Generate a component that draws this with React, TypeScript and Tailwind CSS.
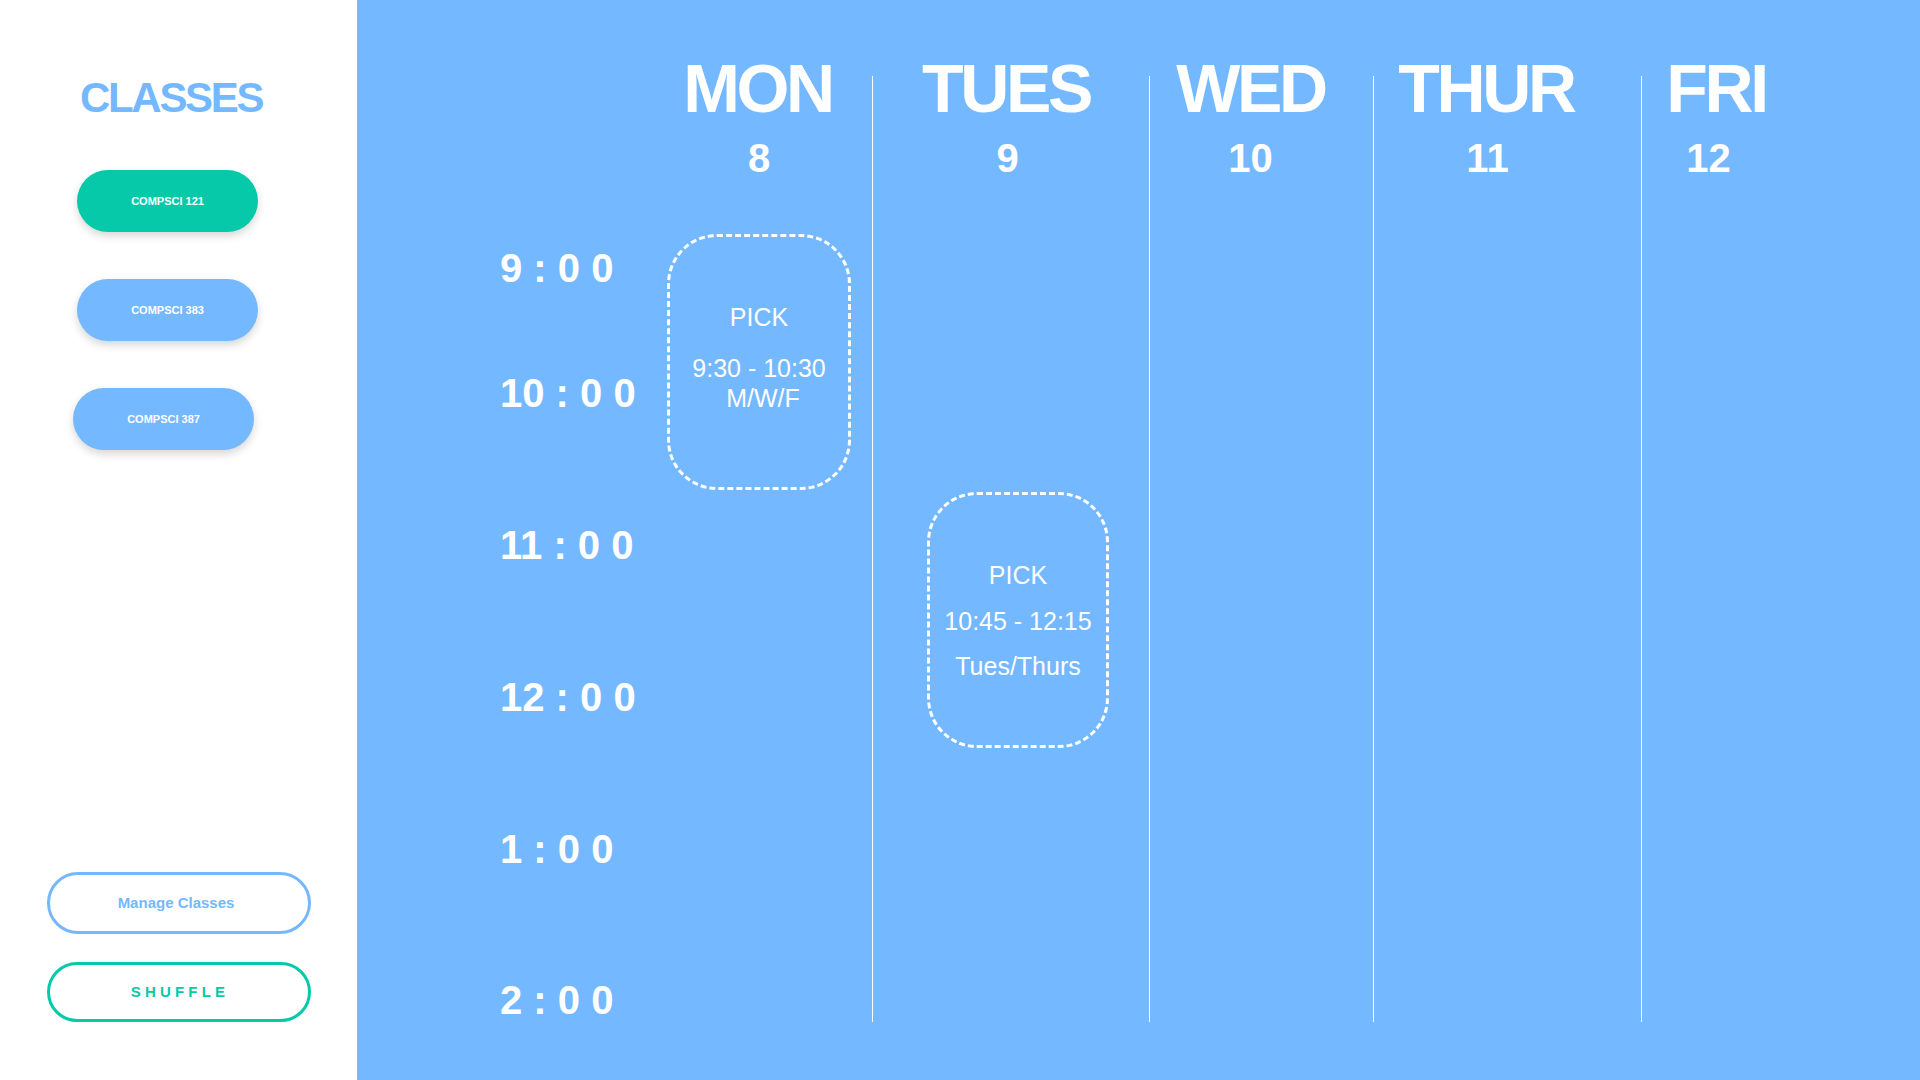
const classes = [
  { name: "COMPSCI 121", active: true, shift: "ml-[77px]", mt: "mt-[51px]" },
  { name: "COMPSCI 383", active: false, shift: "ml-[77px]", mt: "mt-[47px]" },
  { name: "COMPSCI 387", active: false, shift: "ml-[73px]", mt: "mt-[47px]" },
];

const times = [
  { label: "9 : 0 0", mt: "mt-[248px]" },
  { label: "10 : 0 0", mt: "mt-[85px]" },
  { label: "11 : 0 0", mt: "mt-[112px]" },
  { label: "12 : 0 0", mt: "mt-[112px]" },
  { label: "1 : 0 0", mt: "mt-[112px]" },
  { label: "2 : 0 0", mt: "mt-[111px]" },
];

function Sidebar() {
  return (
    <aside className="w-[357px] h-full bg-white flex flex-col items-start pt-[77px] pb-[58px]">
      <h1 className="ml-[80px] text-[42px] leading-none font-bold tracking-[-0.055em] text-[#74B8FF]">
        CLASSES
      </h1>

      {classes.map((c) => (
        <button
          key={c.name}
          className={`${c.shift} ${c.mt} w-[181px] h-[62px] rounded-full flex items-center justify-center text-[11px] font-bold text-white shadow-[0_4px_9px_rgba(0,0,0,0.16)] ${
            c.active ? "bg-[#05C9A8]" : "bg-[#74B8FF]"
          }`}
        >
          {c.name}
        </button>
      ))}

      {/* bottom actions */}
      <div className="mt-auto ml-[47px] flex flex-col gap-[28px]">
        <button className="w-[264px] h-[62px] rounded-full border-[3px] border-[#74B8FF] bg-white text-[15px] font-bold text-[#74B8FF] pr-[6px]">
          Manage Classes
        </button>
        <button className="w-[264px] h-[60px] rounded-full border-[3px] border-[#05C9A8] bg-white text-[15px] font-bold tracking-[0.28em] pl-[2px] text-[#05C9A8]">
          SHUFFLE
        </button>
      </div>
    </aside>
  );
}

function PickCard({
  time,
  days,
  className,
  gapA,
  gapB,
}: {
  time: string;
  days: string;
  className: string;
  gapA: string;
  gapB: string;
}) {
  return (
    <div
      className={`h-[256px] rounded-[50px] border-[3px] border-dashed border-white flex flex-col items-center pt-[68px] text-white text-[25px] leading-none ${className}`}
    >
      <span>PICK</span>
      <span className={gapA}>{time}</span>
      <span className={gapB}>{days}</span>
    </div>
  );
}

function DayColumn({
  day,
  date,
  width,
  border,
  dayPad,
  datePad,
  children,
}: {
  day: string;
  date: string;
  width: string;
  border: boolean;
  dayPad: string;
  datePad: string;
  children?: React.ReactNode;
}) {
  return (
    <div
      className={`${width} mt-[76px] h-[946px] flex flex-col shrink-0 ${
        border ? "border-l border-white" : ""
      }`}
    >
      <div className={`-mt-[22px] text-center text-[68px] leading-none font-bold tracking-[-0.05em] text-white ${dayPad}`}>
        {day}
      </div>
      <div className={`mt-[16px] text-center text-[40px] leading-none font-bold text-white ${datePad}`}>
        {date}
      </div>
      {children}
    </div>
  );
}

export default function App() {
  return (
    <div className="w-[1920px] h-[1080px] flex overflow-hidden font-['Liberation_Sans',Arial,sans-serif]">
      <Sidebar />

      <main className="flex-1 h-full bg-[#74B8FF] flex items-start">
        {/* time labels */}
        <div className="w-[289px] shrink-0 pl-[143px] flex flex-col">
          {times.map((t) => (
            <span
              key={t.label}
              className={`${t.mt} text-[40px] leading-none font-bold text-white whitespace-pre`}
            >
              {t.label}
            </span>
          ))}
        </div>

        <DayColumn day="MON" date="8" width="w-[226px]" border={false} dayPad="pr-[3px]" datePad="">
          <PickCard
            time="9:30 - 10:30"
            days="M/W/F"
            className="mt-[56px] ml-[21px] w-[184px]"
            gapA="mt-[26px]"
            gapB="mt-[5px] pl-[8px]"
          />
        </DayColumn>

        <DayColumn day="TUES" date="9" width="w-[277px]" border dayPad="pr-[10px]" datePad="pr-[7px]">
          <PickCard
            time="10:45 - 12:15"
            days="Tues/Thurs"
            className="mt-[314px] ml-[54px] w-[182px]"
            gapA="mt-[21px]"
            gapB="mt-[20px]"
          />
        </DayColumn>

        <DayColumn day="WED" date="10" width="w-[224px]" border dayPad="pr-[22px]" datePad="pr-[22px]" />
        <DayColumn day="THUR" date="11" width="w-[268px]" border dayPad="pr-[43px]" datePad="pr-[40px]" />
        <DayColumn day="FRI" date="12" width="w-[152px]" border dayPad="pr-[3px]" datePad="pr-[18px]" />
      </main>
    </div>
  );
}
